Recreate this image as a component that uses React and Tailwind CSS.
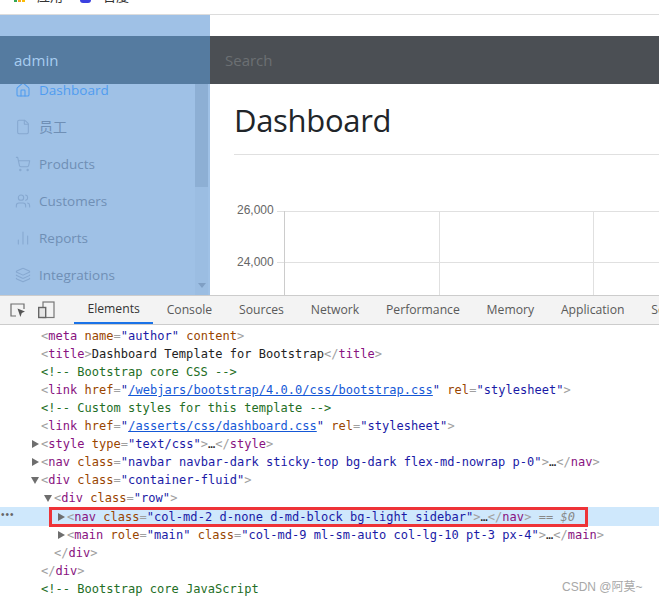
import React from "react";
import { House, File, ShoppingCart, Users, ChartNoAxesColumn, Layers } from "lucide-react";

const B = ({ children }) => <span className="text-[#a0a0a0]">{children}</span>;
const T = ({ children }) => <span className="text-[#881280]">{children}</span>;
const A = ({ children }) => <span className="text-[#994500]">{children}</span>;
const V = ({ children }) => <span className="text-[#1a1aa6]">{children}</span>;
const C = ({ children }) => <span className="text-[#236e25]">{children}</span>;
const L = ({ children }) => <span className="text-[#1558d6] underline">{children}</span>;
const Tx = ({ children }) => <span className="text-[#222]">{children}</span>;

const Arrow = ({ open }) =>
  open ? (
    <span className="w-0 h-0 mr-[2px] border-l-[4px] border-r-[4px] border-t-[7px] border-l-transparent border-r-transparent border-t-[#6e6e6e]" />
  ) : (
    <span className="w-0 h-0 mr-[2px] border-t-[4px] border-b-[4px] border-l-[7px] border-t-transparent border-b-transparent border-l-[#6e6e6e]" />
  );

function Line({ indent, arrow, open, selected, children }) {
  return (
    <div className={selected ? "flex h-[19px] items-center bg-[#cfe8fc] whitespace-pre" : "flex h-[18px] items-center whitespace-pre"}>
      <div className={indent}></div>
      {arrow ? <Arrow open={open} /> : null}
      <span>{children}</span>
    </div>
  );
}

const nav = [
  ["Dashboard", House, "text-[#4f9cf0]", "text-[#4f9cf0]", "text-[13.5px] font-medium"],
  ["员工", File, "text-[#6f8fb5]", "text-[#86a8d0]", "text-[14px] font-normal"],
  ["Products", ShoppingCart, "text-[#6f8fb5]", "text-[#86a8d0]", "text-[13.5px] font-medium"],
  ["Customers", Users, "text-[#6f8fb5]", "text-[#86a8d0]", "text-[13.5px] font-medium"],
  ["Reports", ChartNoAxesColumn, "text-[#6f8fb5]", "text-[#86a8d0]", "text-[13.5px] font-medium"],
  ["Integrations", Layers, "text-[#6f8fb5]", "text-[#86a8d0]", "text-[13.5px] font-medium"],
];

const tabs = ["Elements", "Console", "Sources", "Network", "Performance", "Memory", "Application", "Security"];

export default function App() {
  return (
    <div className="relative w-[659px] h-[603px] overflow-hidden bg-white font-['Open_Sans',sans-serif]">
      <div className="h-[15px] border-b border-[#dcdcdc] overflow-hidden flex items-start text-[13px] leading-[14px] text-[#333] font-['Noto_Sans_CJK_SC',sans-serif]">
        <div className="flex gap-[1px] ml-[14px] w-[13px] shrink-0">
          <span className="w-[3px] h-[2px] bg-[#34a853]" />
          <span className="w-[3px] h-[2px] bg-[#f5a623]" />
          <span className="w-[3px] h-[2px] bg-[#fbbc05]" />
        </div>
        <span className="ml-[10px] -mt-[11px]">应用</span>
        <span className="ml-[17px] w-[11px] h-[3px] rounded-b-full bg-[#3b40e0]" />
        <span className="ml-[12px] -mt-[11px]">百度</span>
      </div>

      <div className="flex h-[280px] overflow-hidden">
        <aside className="w-[210px] shrink-0 bg-[#9fc1e6] flex">
          <div className="w-[195px] pt-[62px] pl-[15px] flex flex-col gap-[11px] leading-[26px]">
            {nav.map(([label, Icon, textColor, iconColor, textSize]) => (
              <div key={label} className={`flex items-center h-[26px] ${textColor}`}>
                <Icon size={16} strokeWidth={1.6} className={`${iconColor} w-[16px] shrink-0`} />
                <span className={`ml-[8px] ${textSize} font-['Open_Sans','Noto_Sans_CJK_SC',sans-serif]`}>{label}</span>
              </div>
            ))}
          </div>
          <div className="w-[13px] mt-[69px] flex flex-col justify-between bg-[#9bbde2]">
            <div className="h-[103px] bg-[#8dafd4]" />
            <div className="self-center mb-[7px] w-0 h-0 border-l-[4px] border-r-[4px] border-t-[5px] border-l-transparent border-r-transparent border-t-[#7f9fc4]" />
          </div>
        </aside>

        <main className="flex-1 pl-[24px] pt-[83px]">
          <h1 className="text-[31px] tracking-[-0.3px] leading-[44px] text-[#212529] font-medium">Dashboard</h1>
          <div className="mt-[12px] h-px bg-[#e0e0e0]" />
          <div className="mt-[56px] flex text-[12px] text-[#666] font-['Liberation_Sans',sans-serif]">
            <div className="w-[47px] ml-[3px] shrink-0 flex flex-col">
              <div className="h-[51px] flex items-start">
                <span className="w-[40px] -mt-[8px] leading-[15px]">26,000</span>
                <span className="w-[7px] h-px bg-[#e0e0e0]" />
              </div>
              <div className="h-[51px] flex items-start">
                <span className="w-[40px] -mt-[7px] leading-[15px]">24,000</span>
                <span className="w-[7px] h-px bg-[#e0e0e0]" />
              </div>
            </div>
            <div className="flex-1 border-l border-[#cccccc] grid grid-cols-[155px_154px_1fr] grid-rows-[51px_51px]">
              <div className="border-t border-r border-[#e0e0e0]" />
              <div className="border-t border-r border-[#e0e0e0]" />
              <div className="border-t border-[#e0e0e0]" />
              <div className="border-t border-r border-[#e0e0e0]" />
              <div className="border-t border-r border-[#e0e0e0]" />
              <div className="border-t border-[#e0e0e0]" />
            </div>
          </div>
        </main>
      </div>

      <div className="absolute left-0 right-0 top-[36px] h-[48px] flex items-center bg-[#4b4f54]">
        <div className="w-[210px] h-full bg-[#557ba0] flex items-center pl-[14px] text-[15px] text-[#a8cdf0]">admin</div>
        <div className="pl-[15px] text-[15px] text-[#6b6f73]">Search</div>
      </div>

      <div className="h-[30px] bg-[#f3f3f3] border-t border-b border-[#cccccc] flex items-stretch text-[12.2px] text-[#5a5a5a] overflow-hidden">
        <div className="w-[67px] shrink-0 flex items-center pl-[10px] gap-[12px]">
          <svg width="16" height="16" viewBox="0 0 16 16" fill="none">
            <path d="M6 14H1V2h13v5" stroke="#6e6e6e" strokeWidth="1.2" />
            <path d="M7.5 6.5l7.5 3-3.2 1.4L10.400 15z" fill="#555" />
          </svg>
          <svg width="17" height="18" viewBox="0 0 17 18" fill="none">
            <rect x="5" y="1" width="11" height="15.500" stroke="#777" strokeWidth="1.200" />
            <rect x="0.7" y="6.500" width="7" height="10" fill="#e6e6e6" stroke="#666" strokeWidth="1.400" />
          </svg>
        </div>
        <div className="w-px h-[17px] self-center bg-[#ccc]" />
        <div className="flex ml-[7px] whitespace-nowrap">
          {tabs.map((t) => (
            <div key={t} className={t === "Elements" ? "px-[13.400px] flex items-center border-b-2 border-[#1a73e8] text-[#333]" : "px-[13.400px] flex items-center"}>
              {t}
            </div>
          ))}
        </div>
      </div>

      <div className="pt-[2px] text-[12px] tracking-[0.03px] leading-[18px] font-['DejaVu_Sans_Mono',monospace]">
        <Line indent="w-[41px]"><B>&lt;</B><T>meta</T> <A>name</A><B>=</B><V>"author"</V> <A>content</A><B>&gt;</B></Line>
        <Line indent="w-[41px]"><B>&lt;</B><T>title</T><B>&gt;</B><Tx>Dashboard Template for Bootstrap</Tx><B>&lt;/</B><T>title</T><B>&gt;</B></Line>
        <Line indent="w-[41px]"><C>&lt;!-- Bootstrap core CSS --&gt;</C></Line>
        <Line indent="w-[41px]"><B>&lt;</B><T>link</T> <A>href</A><B>=</B><V>"</V><L>/webjars/bootstrap/4.0.0/css/bootstrap.css</L><V>"</V> <A>rel</A><B>=</B><V>"stylesheet"</V><B>&gt;</B></Line>
        <Line indent="w-[41px]"><C>&lt;!-- Custom styles for this template --&gt;</C></Line>
        <Line indent="w-[41px]"><B>&lt;</B><T>link</T> <A>href</A><B>=</B><V>"</V><L>/asserts/css/dashboard.css</L><V>"</V> <A>rel</A><B>=</B><V>"stylesheet"</V><B>&gt;</B></Line>
        <Line indent="w-[32px]" arrow><B>&lt;</B><T>style</T> <A>type</A><B>=</B><V>"text/css"</V><B>&gt;</B><Tx>…</Tx><B>&lt;/</B><T>style</T><B>&gt;</B></Line>
        <Line indent="w-[32px]" arrow><B>&lt;</B><T>nav</T> <A>class</A><B>=</B><V>"navbar navbar-dark sticky-top bg-dark flex-md-nowrap p-0"</V><B>&gt;</B><Tx>…</Tx><B>&lt;/</B><T>nav</T><B>&gt;</B></Line>
        <Line indent="w-[31px]" arrow open><B>&lt;</B><T>div</T> <A>class</A><B>=</B><V>"container-fluid"</V><B>&gt;</B></Line>
        <Line indent="w-[44px]" arrow open><B>&lt;</B><T>div</T> <A>class</A><B>=</B><V>"row"</V><B>&gt;</B></Line>
        <Line indent="w-[58px]" arrow selected><B>&lt;</B><T>nav</T> <A>class</A><B>=</B><V>"col-md-2 d-none d-md-block bg-light sidebar"</V><B>&gt;</B><Tx>…</Tx><B>&lt;/</B><T>nav</T><B>&gt;</B> <span className="text-[#888]">== </span><span className="italic text-[#888]">$0</span></Line>
        <Line indent="w-[58px]" arrow><B>&lt;</B><T>main</T> <A>role</A><B>=</B><V>"main"</V> <A>class</A><B>=</B><V>"col-md-9 ml-sm-auto col-lg-10 pt-3 px-4"</V><B>&gt;</B><Tx>…</Tx><B>&lt;/</B><T>main</T><B>&gt;</B></Line>
        <Line indent="w-[54px]"><B>&lt;/</B><T>div</T><B>&gt;</B></Line>
        <Line indent="w-[41px]"><B>&lt;/</B><T>div</T><B>&gt;</B></Line>
        <Line indent="w-[41px]"><C>&lt;!-- Bootstrap core JavaScript</C></Line>
      </div>

      <div className="absolute left-[1px] top-[510px] text-[10px] leading-[10px] text-[#666] font-['Liberation_Sans',sans-serif] tracking-[1px]">•••</div>
      <div className="absolute left-[49px] top-[507px] w-[539px] h-[20px] border-[3px] border-[#ee3338]" />
      <div className="absolute left-[562px] top-[579px] text-[12px] leading-[16px] text-[#a8a8a8] font-['Liberation_Sans','Noto_Sans_CJK_SC',sans-serif]">CSDN @阿莫~</div>
    </div>
  );
}
